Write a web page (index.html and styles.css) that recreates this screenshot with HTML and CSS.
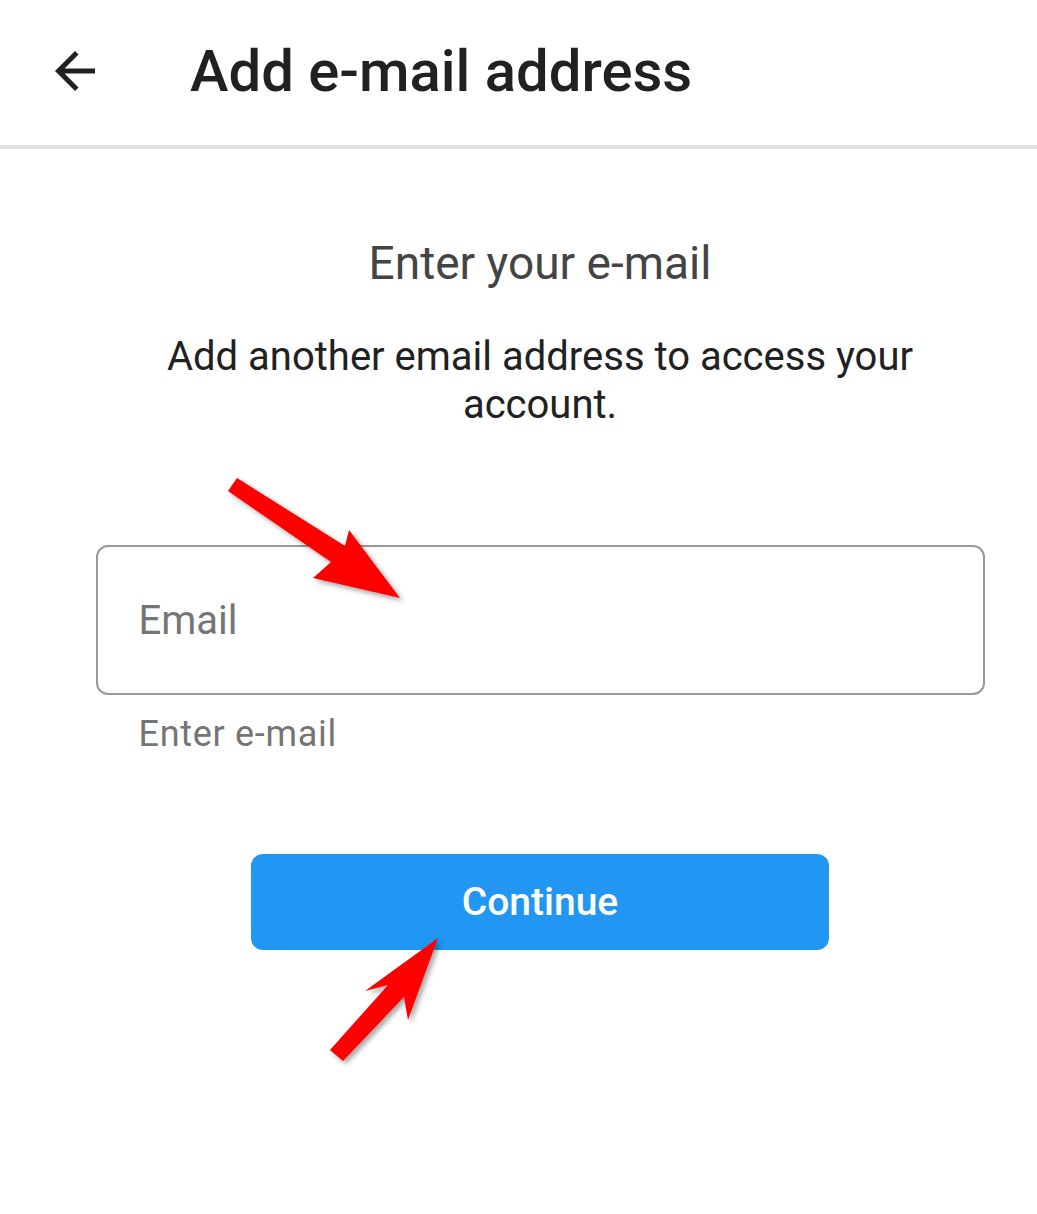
FILE: index.html
```html
<!DOCTYPE html>
<html lang="en">
<head>
<meta charset="utf-8">
<title>Add e-mail address</title>
<link rel="stylesheet" href="styles.css">
</head>
<body>
<div class="screen">
  <header class="topbar">
    <button class="back" aria-label="Back">
      <svg viewBox="0 0 24 24" width="60" height="60"><path d="M20 11H7.83l5.59-5.59L12 4l-8 8 8 8 1.41-1.41L7.83 13H20v-2z" fill="#212121"/></svg>
    </button>
    <h1 class="title">Add e-mail address</h1>
  </header>
  <main class="content">
    <h2 class="heading">Enter your e-mail</h2>
    <p class="desc">Add another email address to access your account.</p>
    <div class="field">
      <div class="input"><span class="placeholder">Email</span></div>
      <div class="helper">Enter e-mail</div>
    </div>
    <button class="continue">Continue</button>
  </main>
  <svg class="annot" width="1037" height="1214" viewBox="0 0 1037 1214">
    <defs>
      <filter id="sh" x="-20%" y="-20%" width="140%" height="140%">
        <feDropShadow dx="3" dy="3" stdDeviation="2.5" flood-color="#000" flood-opacity="0.35"/>
      </filter>
    </defs>
    <g fill="#ff0000" filter="url(#sh)">
      <polygon points="228,491 237,478 345,546 349,530 400,598 313,578 331,562"/>
      <polygon points="343,1061 330,1050 388,985 365,991 438,938 408,1020 404,997"/>
    </g>
  </svg>
</div>
</body>
</html>
```
FILE: styles.css
```css
* { box-sizing: border-box; }
html, body { margin: 0; padding: 0; background: #fff; }
body { font-family: Roboto, "Noto Sans", "Liberation Sans", sans-serif; }
.screen { position: relative; width: 1037px; height: 1214px; overflow: hidden; }
.topbar {
  height: 149px;
  display: flex;
  align-items: center;
  border-bottom: 4px solid #e2e2e2;
  padding-left: 45px;
  padding-bottom: 4px;
}
.back {
  width: 60px; height: 60px; padding: 0; border: 0; background: none;
  display: flex; align-items: center; justify-content: center;
}
.back svg { display: block; }
.title {
  margin: 0 0 0 85px;
  font-size: 58px;
  font-weight: 500;
  color: #212121;
  letter-spacing: 0;
}
.content {
  display: flex;
  flex-direction: column;
  align-items: center;
  padding-top: 86px;
  padding-left: 43px;
}
.heading {
  margin: 0;
  font-size: 46px;
  font-weight: 400;
  color: #444;
  line-height: 56px;
}
.desc {
  margin: 42px 0 0;
  width: 820px;
  text-align: center;
  font-size: 40px;
  line-height: 48px;
  color: #212121;
}
.field { width: 889px; margin-top: 116px; }
.input {
  height: 150px;
  border: 2px solid #999;
  border-radius: 12px;
  display: flex;
  align-items: center;
  padding-left: 41px;
}
.placeholder { font-size: 40px; color: #757575; }
.helper {
  margin-top: 18px;
  padding-left: 43px;
  font-size: 36px;
  color: #757575;
  letter-spacing: 0.7px;
}
.continue {
  margin-top: 99px;
  width: 578px;
  height: 96px;
  border: 0;
  border-radius: 12px;
  background: #2196f3;
  color: #fff;
  font-family: inherit;
  font-size: 39px;
  font-weight: 500;
}
.annot { position: absolute; left: 0; top: 0; pointer-events: none; }
```
